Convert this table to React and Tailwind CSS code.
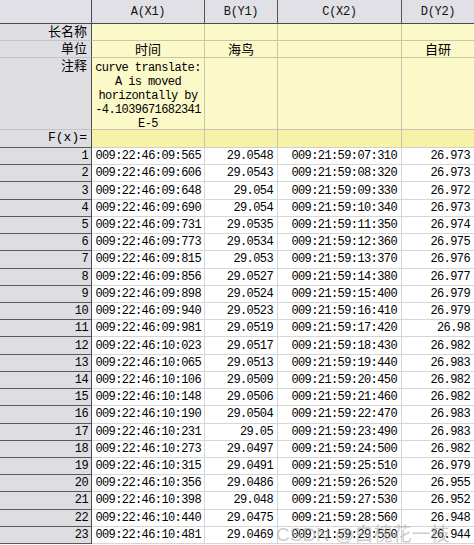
import React from 'react'

const mono = { fontFamily: '"Liberation Mono", "DejaVu Sans Mono", monospace' }
const cjk = { fontFamily: '"Liberation Sans", "Noto Sans CJK SC", sans-serif' }

// grid-rows-1 fija la altura de la fila al alto del contenedor
const cols = 'grid grid-cols-[92px_113px_73px_124px_72px] grid-rows-1'

const datos = [
  ['009:22:46:09:565', '29.0548', '009:21:59:07:310', '26.973'],
  ['009:22:46:09:606', '29.0543', '009:21:59:08:320', '26.973'],
  ['009:22:46:09:648', '29.054', '009:21:59:09:330', '26.972'],
  ['009:22:46:09:690', '29.054', '009:21:59:10:340', '26.973'],
  ['009:22:46:09:731', '29.0535', '009:21:59:11:350', '26.974'],
  ['009:22:46:09:773', '29.0534', '009:21:59:12:360', '26.975'],
  ['009:22:46:09:815', '29.053', '009:21:59:13:370', '26.976'],
  ['009:22:46:09:856', '29.0527', '009:21:59:14:380', '26.977'],
  ['009:22:46:09:898', '29.0524', '009:21:59:15:400', '26.979'],
  ['009:22:46:09:940', '29.0523', '009:21:59:16:410', '26.979'],
  ['009:22:46:09:981', '29.0519', '009:21:59:17:420', '26.98'],
  ['009:22:46:10:023', '29.0517', '009:21:59:18:430', '26.982'],
  ['009:22:46:10:065', '29.0513', '009:21:59:19:440', '26.983'],
  ['009:22:46:10:106', '29.0509', '009:21:59:20:450', '26.982'],
  ['009:22:46:10:148', '29.0506', '009:21:59:21:460', '26.982'],
  ['009:22:46:10:190', '29.0504', '009:21:59:22:470', '26.983'],
  ['009:22:46:10:231', '29.05', '009:21:59:23:490', '26.983'],
  ['009:22:46:10:273', '29.0497', '009:21:59:24:500', '26.982'],
  ['009:22:46:10:315', '29.0491', '009:21:59:25:510', '26.979'],
  ['009:22:46:10:356', '29.0486', '009:21:59:26:520', '26.955'],
  ['009:22:46:10:398', '29.048', '009:21:59:27:530', '26.952'],
  ['009:22:46:10:440', '29.0475', '009:21:59:28:560', '26.948'],
  ['009:22:46:10:481', '29.0469', '009:21:59:29:550', '26.944'],
]

// celdas amarillas de metadatos
function Meta({ children, last = false }) {
  return (
    <div
      className={`bg-[#fcf9c9] border-b border-[#c8c5ae] ${last ? '' : 'border-r'} flex items-center justify-center text-[13px] leading-[15px] text-black overflow-hidden`}
      style={cjk}
    >
      {children}
    </div>
  )
}

function Label({ children, dark = false, font = cjk }) {
  return (
    <div
      className={`bg-[#dedde2] border-r border-r-[#4a4a4a] border-b ${dark ? 'border-b-[#5a5a5a]' : 'border-b-[#c4c3ca]'} flex items-start justify-end pr-[4px] text-[13px] leading-[16px] text-black overflow-hidden`}
      style={font}
    >
      {children}
    </div>
  )
}

export default function App() {
  return (
    <div className="relative w-[474px] h-[545px] overflow-hidden bg-white">
      {/* encabezado de columnas */}
      <div className={`${cols} h-[24px]`} style={mono}>
        <div className="bg-[#e1e0e6] border-r border-b border-[#4a4a4a]" />
        {['A(X1)', 'B(Y1)', 'C(X2)', 'D(Y2)'].map((c, i) => (
          <div
            key={c}
            className={`bg-[#e1e0e6] border-b border-b-[#4a4a4a] ${i < 3 ? 'border-r border-r-[#555]' : ''} flex items-center justify-center text-[12px] leading-[16px] tracking-[-0.3px] text-[#111]`}
          >
            {c}
          </div>
        ))}
      </div>

      {/* 长名称 */}
      <div className={`${cols} h-[17px]`}>
        <Label>长名称</Label>
        <Meta /><Meta /><Meta /><Meta last />
      </div>

      {/* 单位 */}
      <div className={`${cols} h-[17px]`}>
        <Label>单位</Label>
        <Meta>时间</Meta><Meta>海鸟</Meta><Meta /><Meta last>自研</Meta>
      </div>

      {/* 注释 */}
      <div className={`${cols} h-[72px]`}>
        <Label>注释</Label>
        <div
          className="bg-[#fcf9c9] border-r border-b border-[#c8c5ae] pt-[3px] text-center text-[12px] leading-[14px] tracking-[-0.6px] text-black overflow-hidden"
          style={mono}
        >
          <div>curve translate:</div>
          <div>A is moved</div>
          <div>horizontally by</div>
          <div>-4.1039671682341</div>
          <div>E-5</div>
        </div>
        <Meta /><Meta /><Meta last />
      </div>

      {/* F(x)= */}
      <div className={`${cols} h-[18px]`}>
        <Label dark font={mono}>F(x)=</Label>
        {[0, 1, 2, 3].map((i) => (
          <div key={i} className={`bg-[#f8f2a8] border-b border-b-[#cfcfcf] ${i < 3 ? 'border-r border-r-[#c8c5ae]' : ''}`} />
        ))}
      </div>

      {/* filas de datos */}
      {datos.map((fila, idx) => (
        <div key={idx} className={`${cols} h-[17.22px] text-[12px] leading-[14px] tracking-[-0.6px] text-black`} style={mono}>
          <div className="bg-[#dedde2] border-r border-r-[#4a4a4a] border-b border-b-[#5a5a5a] flex items-center justify-end pr-[3px]">
            {idx + 1}
          </div>
          <div className="border-r border-b border-[#d6d6d6] flex items-center justify-end pr-[3px]">{fila[0]}</div>
          <div className="border-r border-b border-[#d6d6d6] flex items-center justify-end pr-[4px]">{fila[1]}</div>
          <div className="border-r border-b border-[#d6d6d6] flex items-center justify-end pr-[4px]">{fila[2]}</div>
          <div className="border-b border-[#d6d6d6] flex items-center justify-end pr-[4px]">{fila[3]}</div>
        </div>
      ))}

      {/* marca de agua */}
      <div
        className="absolute left-[276px] top-[524px] text-[19px] leading-[22px] text-[#a8a8a8]/60 whitespace-nowrap pointer-events-none"
        style={cjk}
      >
        CSDN @白槐花一枝
      </div>
    </div>
  )
}
